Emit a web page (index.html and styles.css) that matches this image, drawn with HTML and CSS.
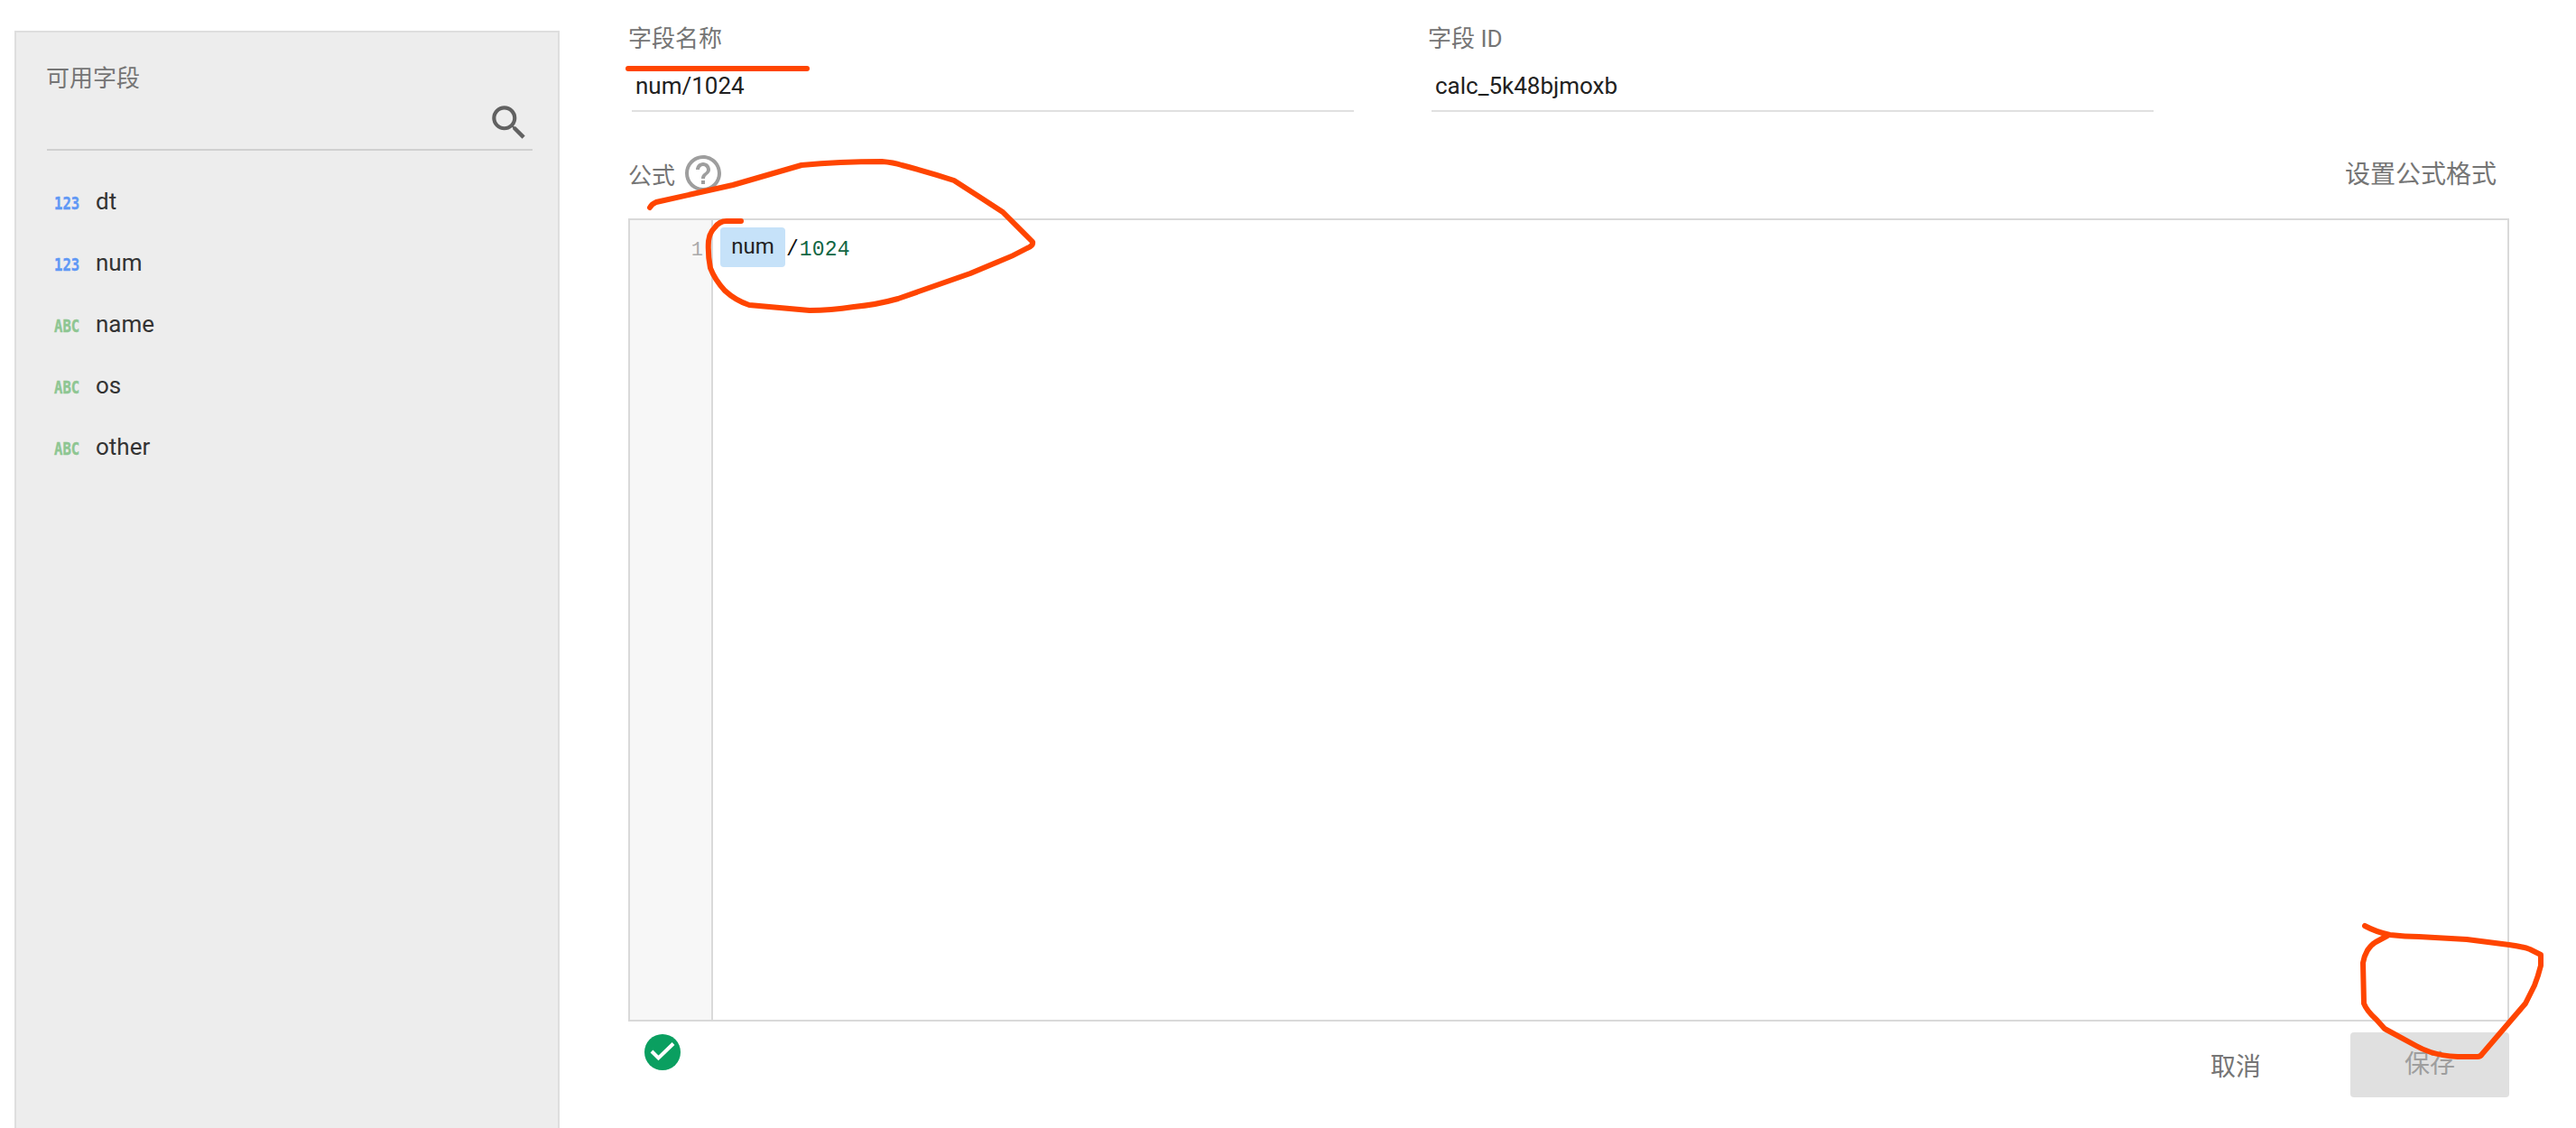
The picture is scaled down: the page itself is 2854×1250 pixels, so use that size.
FILE: index.html
```html
<!DOCTYPE html>
<html lang="zh">
<head>
<meta charset="utf-8">
<title>字段</title>
<link rel="stylesheet" href="styles.css">
</head>
<body>
<div class="app">
  <aside class="side">
    <div class="side-title">可用字段</div>
    <div class="search">
      <svg class="search-icon" viewBox="0 0 24 24"><path d="M15.5 14h-.79l-.28-.27A6.47 6.47 0 0 0 16 9.5 6.5 6.5 0 1 0 9.5 16c1.61 0 3.09-.59 4.23-1.57l.27.28v.79l5 4.99L20.49 19l-4.99-5zm-6 0C7.01 14 5 11.99 5 9.5S7.01 5 9.5 5 14 7.01 14 9.5 11.99 14 9.5 14z"/></svg>
    </div>
    <ul class="fields">
      <li class="field"><span class="type type-num"><span class="type-text">123</span></span><span>dt</span></li>
      <li class="field"><span class="type type-num"><span class="type-text">123</span></span><span>num</span></li>
      <li class="field"><span class="type type-str"><span class="type-text">ABC</span></span><span>name</span></li>
      <li class="field"><span class="type type-str"><span class="type-text">ABC</span></span><span>os</span></li>
      <li class="field"><span class="type type-str"><span class="type-text">ABC</span></span><span>other</span></li>
    </ul>
  </aside>
  <main class="main">
    <div class="top-fields">
      <div class="top-field">
        <div class="label">字段名称</div>
        <div class="input">num/1024</div>
      </div>
      <div class="top-field">
        <div class="label">字段 ID</div>
        <div class="input">calc_5k48bjmoxb</div>
      </div>
    </div>
    <div class="formula-head">
      <div class="formula-label">
        <span class="label-text">公式</span>
        <svg class="help-icon" viewBox="0 0 24 24"><path d="M11 18h2v-2h-2v2zm1-16C6.48 2 2 6.48 2 12s4.48 10 10 10 10-4.48 10-10S17.52 2 12 2zm0 18c-4.41 0-8-3.59-8-8s3.59-8 8-8 8 3.59 8 8-3.59 8-8 8zm0-14c-2.21 0-4 1.79-4 4h2c0-1.1.9-2 2-2s2 .9 2 2c0 2-3 1.75-3 5h2c0-2.25 3-2.5 3-5 0-2.21-1.79-4-4-4z"/></svg>
      </div>
      <div class="format">设置公式格式</div>
    </div>
    <div class="editor">
      <div class="gutter"><span class="line-no">1</span></div>
      <div class="code">
        <span class="chip">num</span><span class="slash">/</span><span class="number">1024</span>
      </div>
    </div>
    <div class="footer">
      <svg class="ok-icon" viewBox="0 0 40 40"><circle cx="20" cy="20" r="20" class="ok-bg"/><path d="M8 19l7.500 7.500L32 10.500" class="ok-check"/></svg>
      <div class="actions">
        <div class="btn-cancel">取消</div>
        <div class="btn-save">保存</div>
      </div>
    </div>
  </main>
  <svg class="ink" viewBox="0 0 2854 1250" width="2854" height="1250">
    <path d="M696 76 L894 76"/>
    <path d="M720 230 Q722 226 727 224 L812 205 L888 183 Q930 179 977 179 Q990 180 999 183 Q1030 191 1057 200 Q1085 218 1111 235 L1144 268 Q1145 272 1138 275 Q1122 284 1106 290 L1075 303 L995 331 Q970 338 946 340 Q920 344 897 344 L830 338 Q815 333 803 322 Q792 310 787 297 Q784 282 785 267 Q786 258 792 252 Q797 245 805 245 L821 245"/>
    <path d="M2620 1026 Q2633 1033 2648 1036 Q2665 1038 2680 1038 L2733 1041 L2780 1047 Q2795 1049 2803 1052 L2815 1058 L2815 1070 Q2812 1082 2808 1092 L2798 1112 L2750 1168 Q2748 1171 2745 1171 L2723 1171 Q2705 1170 2693 1166 Q2684 1163 2677 1159 L2642 1140 L2633 1130 Q2622 1120 2619 1112 L2618 1067 Q2619 1060 2623 1053 Q2627 1047 2632 1044 L2645 1037"/>
  </svg>
</div>
</body>
</html>
```

FILE: styles.css
```css
* { box-sizing: border-box; }
html, body { margin: 0; padding: 0; background: #fff; }
body { font-family: Roboto, "Noto Sans CJK SC", sans-serif; }

.app {
  position: relative;
  display: flex;
  width: 2854px;
  height: 1250px;
  overflow: hidden;
  padding-left: 16px;
}

.side {
  width: 604px;
  height: 1224px;
  margin-top: 34px;
  background: #ededed;
  border: 2px solid #dedede;
  flex: none;
}
.side-title {
  margin: 32px 0 0 33px;
  height: 38px;
  line-height: 38px;
  font-size: 26px;
  color: #757575;
}
.search {
  display: flex;
  justify-content: flex-end;
  align-items: center;
  height: 61px;
  margin: 0 28px 0 34px;
  border-bottom: 2px solid #d0d0d0;
}
.search-icon { width: 50px; height: 50px; fill: #616161; margin-top: 0; margin-right: 1px; }
.fields { list-style: none; margin: 22px 0 0; padding: 0 0 0 42px; }
.field {
  display: flex;
  align-items: center;
  height: 68px;
  font-size: 26px;
  color: #333;
}
.type { width: 46px; flex: none; height: 20px; line-height: 20px; overflow: visible; }
.type-text {
  display: inline-block;
  font-family: "DejaVu Sans Mono", monospace;
  font-weight: 700;
  font-size: 20px;
  transform: scaleX(.78);
  transform-origin: left center;
  -webkit-text-stroke: .4px currentColor;
}
.type-num { color: #5f98f5; }
.type-str { color: #8ec692; }

.main { margin-left: 76px; width: 2084px; flex: none; }

.top-fields { display: flex; gap: 86px; padding-left: 4px; }
.top-field { width: 800px; }
.label {
  margin-left: -4px;
  height: 34px;
  margin-top: 26px;
  line-height: 34px;
  font-size: 26px;
  color: #757575;
}
.input {
  height: 64px;
  padding: 15px 0 0 4px;
  line-height: 40px;
  font-size: 26px;
  color: #212121;
  border-bottom: 2px solid #e0e0e0;
}

.formula-head {
  display: flex;
  justify-content: space-between;
  align-items: center;
  height: 40px;
  margin-top: 48px;
  padding-right: 14px;
}
.formula-label { display: flex; align-items: center; gap: 11px; }
.label-text { font-size: 26px; color: #757575; }
.help-icon { width: 48px; height: 48px; fill: #9e9e9e; margin-left: -4px; }
.format { font-size: 28px; color: #757575; margin-top: -2px; }

.editor {
  display: flex;
  height: 890px;
  margin-top: 30px;
  border: 2px solid #d9d9d9;
}
.gutter {
  width: 92px;
  flex: none;
  background: #f7f7f7;
  border-right: 2px solid #d9d9d9;
  text-align: right;
  padding: 16px 9px 0 0;
}
.line-no {
  font-family: "Liberation Mono", monospace;
  font-size: 22px;
  line-height: 36px;
  color: #aaa;
}
.code {
  display: flex;
  align-items: center;
  align-self: flex-start;
  height: 44px;
  margin-top: 8px;
  padding-left: 8px;
  font-family: "Liberation Mono", monospace;
  font-size: 23px;
}
.chip {
  display: block;
  width: 72px;
  height: 44px;
  line-height: 42px;
  text-align: center;
  border-radius: 4px;
  background: #c6e2f9;
  font-family: Roboto, sans-serif;
  font-size: 24px;
  color: #212121;
}
.slash { color: #111; margin-left: 1px; padding-top: 6px; }
.number { color: #116644; margin-left: 1px; padding-top: 6px; letter-spacing: .2px; }

.footer {
  display: flex;
  justify-content: space-between;
  align-items: flex-start;
  padding-top: 12px;
}
.ok-icon { width: 40px; height: 40px; margin: 2px 0 0 18px; }
.ok-bg { fill: #0a9f60; }
.ok-check { fill: none; stroke: #fff; stroke-width: 4; }
.actions { display: flex; align-items: center; }
.btn-cancel { font-size: 28px; color: #757575; margin-right: 99px; }
.btn-save {
  width: 176px;
  height: 72px;
  line-height: 72px;
  text-align: center;
  border-radius: 4px;
  background: #e0e0e0;
  font-size: 28px;
  color: #9e9e9e;
}

.ink {
  position: absolute;
  left: 0;
  top: 0;
  fill: none;
  stroke: #ff4500;
  stroke-width: 6;
  stroke-linecap: round;
  stroke-linejoin: round;
  pointer-events: none;
}
```
